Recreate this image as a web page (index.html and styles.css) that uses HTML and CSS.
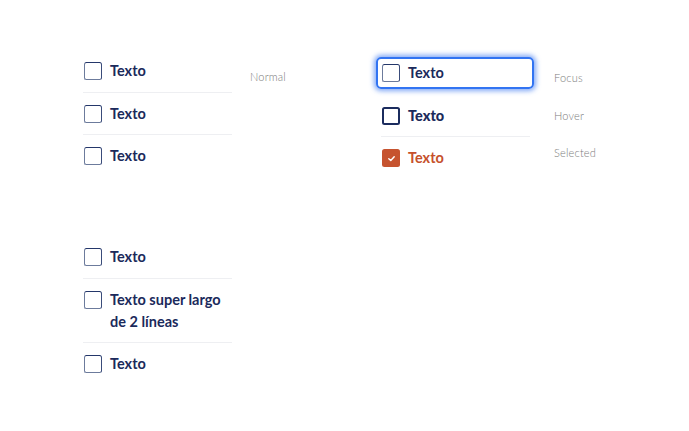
FILE: index.html
```html
<!DOCTYPE html>
<html lang="es">
<head>
<meta charset="utf-8">
<title>Checkbox list</title>
<link rel="stylesheet" href="styles.css">
</head>
<body>
<div class="page">
  <div class="top">
    <ul class="list">
      <li class="row"><span class="box"></span><span class="label">Texto</span></li>
      <li class="row"><span class="box"></span><span class="label">Texto</span></li>
      <li class="row"><span class="box"></span><span class="label">Texto</span></li>
    </ul>
    <div class="notes notes-left">
      <span class="note">Normal</span>
    </div>
    <ul class="list list-right">
      <li class="row focus"><span class="box"></span><span class="label">Texto</span></li>
      <li class="row hover"><span class="box"></span><span class="label">Texto</span></li>
      <li class="row selected"><span class="box"><svg viewBox="0 0 10 10" width="9" height="9"><path d="M2 5.2 L4.2 7.2 L8 3" fill="none" stroke="#fff" stroke-width="1.6" stroke-linecap="round" stroke-linejoin="round"/></svg></span><span class="label">Texto</span></li>
    </ul>
    <div class="notes notes-right">
      <span class="note">Focus</span>
      <span class="note">Hover</span>
      <span class="note">Selected</span>
    </div>
  </div>
  <ul class="list bottom">
    <li class="row"><span class="box"></span><span class="label">Texto</span></li>
    <li class="row"><span class="box"></span><span class="label">Texto super largo de 2 líneas</span></li>
    <li class="row"><span class="box"></span><span class="label">Texto</span></li>
  </ul>
</div>
</body>
</html>
```

FILE: styles.css
```css
* { box-sizing: border-box; }
html, body { margin: 0; padding: 0; background: #ffffff; }
body { width: 689px; height: 431px; overflow: hidden; font-family: "Lato", "Liberation Sans", sans-serif; }

.page { padding: 50px 0 0 83px; }

.top { display: flex; align-items: flex-start; }

.list { list-style: none; margin: 0; padding: 0; width: 149px; }
.list-right { padding-top: 2px; }

.row {
  position: relative;
  display: flex;
  align-items: flex-start;
  gap: 8px;
  padding: 10px 0 9.5px;
  border-bottom: 1px solid #eeeff2;
  color: #1b2a5b;
  font-size: 14.5px;
  font-weight: 700;
  line-height: 22px;
}
.row:last-child { border-bottom: none; }

.box {
  flex: none;
  width: 18px;
  height: 18px;
  margin-top: 2px;
  margin-left: 1px;
  border-radius: 2.5px;
  border: 1.5px solid #6c7b9c;
  border-top-color: #24376a;
  border-right-color: #3a4c7a;
  display: flex;
  align-items: center;
  justify-content: center;
  background: #fff;
}

.label { display: block; }

.focus { border-bottom-color: transparent; }
.focus::before {
  content: "";
  position: absolute;
  left: -5px;
  right: -4px;
  top: 5px;
  bottom: 5px;
  border: 2px solid #3274f2;
  border-radius: 5px;
  box-shadow: 0 0 5px 2px rgba(47, 111, 240, 0.6);
  pointer-events: none;
}

.hover .box { border: 2px solid #1b2c5e; }
.hover .label { font-weight: 900; }

.selected { color: #c6502b; }
.selected .box { border: none; background: #c6532f; }

.notes { display: flex; flex-direction: column; }
.notes-left { width: 149px; padding: 21px 0 0 18px; }
.notes-right { padding: 22px 0 0 24px; gap: 25.5px; }
.note {
  font-family: "Lato", "Open Sans", sans-serif;
  font-weight: 300;
  font-size: 11px;
  line-height: 12px;
  color: #7c7c7c;
  letter-spacing: 0.2px;
}

.bottom { margin-top: 57.5px; }
.bottom .row:nth-child(2) .label { width: 124px; }
```
